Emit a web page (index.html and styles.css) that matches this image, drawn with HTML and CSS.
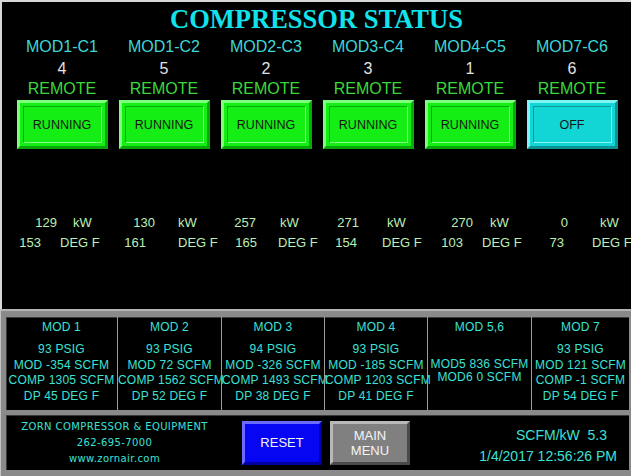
FILE: index.html
```html
<!DOCTYPE html>
<html lang="en">
<head>
    <meta charset="utf-8">
    <title>Compressor Status</title>
    <link rel="stylesheet" href="styles.css">
</head>
<body>
<div class="screen">
    <section class="status">
        <h1 class="title">COMPRESSOR STATUS</h1>
        <div class="units">
            <div class="unit">
                <div class="unit-name">MOD1-C1</div>
                <div class="unit-seq">4</div>
                <div class="unit-mode">REMOTE</div>
                <div class="btn btn-run"><span class="btn-face">RUNNING</span></div>
                <div class="reading kw"><span class="val">129</span><span class="lbl">kW</span></div>
                <div class="reading temp"><span class="val">153</span><span class="lbl">DEG F</span></div>
            </div>
            <div class="unit">
                <div class="unit-name">MOD1-C2</div>
                <div class="unit-seq">5</div>
                <div class="unit-mode">REMOTE</div>
                <div class="btn btn-run"><span class="btn-face">RUNNING</span></div>
                <div class="reading kw"><span class="val">130</span><span class="lbl">kW</span></div>
                <div class="reading temp"><span class="val">161</span><span class="lbl">DEG F</span></div>
            </div>
            <div class="unit">
                <div class="unit-name">MOD2-C3</div>
                <div class="unit-seq">2</div>
                <div class="unit-mode">REMOTE</div>
                <div class="btn btn-run"><span class="btn-face">RUNNING</span></div>
                <div class="reading kw"><span class="val">257</span><span class="lbl">kW</span></div>
                <div class="reading temp"><span class="val">165</span><span class="lbl">DEG F</span></div>
            </div>
            <div class="unit">
                <div class="unit-name">MOD3-C4</div>
                <div class="unit-seq">3</div>
                <div class="unit-mode">REMOTE</div>
                <div class="btn btn-run"><span class="btn-face">RUNNING</span></div>
                <div class="reading kw"><span class="val">271</span><span class="lbl">kW</span></div>
                <div class="reading temp"><span class="val">154</span><span class="lbl">DEG F</span></div>
            </div>
            <div class="unit">
                <div class="unit-name">MOD4-C5</div>
                <div class="unit-seq">1</div>
                <div class="unit-mode">REMOTE</div>
                <div class="btn btn-run"><span class="btn-face">RUNNING</span></div>
                <div class="reading kw"><span class="val">270</span><span class="lbl">kW</span></div>
                <div class="reading temp"><span class="val">103</span><span class="lbl">DEG F</span></div>
            </div>
            <div class="unit">
                <div class="unit-name">MOD7-C6</div>
                <div class="unit-seq">6</div>
                <div class="unit-mode">REMOTE</div>
                <div class="btn btn-off"><span class="btn-face">OFF</span></div>
                <div class="reading kw"><span class="val">0</span><span class="lbl">kW</span></div>
                <div class="reading temp"><span class="val">73</span><span class="lbl">DEG F</span></div>
            </div>
        </div>
    </section>

    <section class="panel">
        <div class="mods">
            <div class="mod">
                <div class="mod-head">MOD 1</div>
                <div class="mod-lines">
                    <div>93 PSIG</div>
                    <div>MOD -354 SCFM</div>
                    <div>COMP 1305 SCFM</div>
                    <div>DP 45 DEG F</div>
                </div>
            </div>
            <div class="mod">
                <div class="mod-head">MOD 2</div>
                <div class="mod-lines">
                    <div>93 PSIG</div>
                    <div>MOD 72 SCFM</div>
                    <div>COMP 1562 SCFM</div>
                    <div>DP 52 DEG F</div>
                </div>
            </div>
            <div class="mod">
                <div class="mod-head">MOD 3</div>
                <div class="mod-lines">
                    <div>94 PSIG</div>
                    <div>MOD -326 SCFM</div>
                    <div>COMP 1493 SCFM</div>
                    <div>DP 38 DEG F</div>
                </div>
            </div>
            <div class="mod">
                <div class="mod-head">MOD 4</div>
                <div class="mod-lines">
                    <div>93 PSIG</div>
                    <div>MOD -185 SCFM</div>
                    <div>COMP 1203 SCFM</div>
                    <div>DP 41 DEG F</div>
                </div>
            </div>
            <div class="mod">
                <div class="mod-head">MOD 5,6</div>
                <div class="mod-lines mod-lines-short">
                    <div>MOD5 836 SCFM</div>
                    <div>MOD6 0 SCFM</div>
                </div>
            </div>
            <div class="mod">
                <div class="mod-head">MOD 7</div>
                <div class="mod-lines">
                    <div>93 PSIG</div>
                    <div>MOD 121 SCFM</div>
                    <div>COMP -1 SCFM</div>
                    <div>DP 54 DEG F</div>
                </div>
            </div>
        </div>

        <div class="footer">
            <div class="company">
                <div>ZORN COMPRESSOR &amp; EQUIPMENT</div>
                <div>262-695-7000</div>
                <div>www.zornair.com</div>
            </div>
            <div class="key key-reset">RESET</div>
            <div class="key key-menu">MAIN<br>MENU</div>
            <div class="summary">
                <div class="ratio">SCFM/kW&nbsp;&nbsp;5.3</div>
                <div class="clock">1/4/2017 12:56:26 PM</div>
            </div>
        </div>
    </section>
</div>
</body>
</html>
```

FILE: styles.css
```css
body {
    margin: 0;
    background: #000;
    font-family: "Liberation Sans", Arial, sans-serif;
}

.screen {
    width: 631px;
    height: 476px;
    overflow: hidden;
    background: #000;
}

/* upper half: one column per compressor */
.status {
    height: 307px;
    border-top: 2px solid #d8d8d8;
    border-left: 2px solid #d8d8d8;
    overflow: hidden;
}

.title {
    margin: 2px 0 0;
    font-family: "Liberation Serif", "Times New Roman", serif;
    font-size: 26.5px;
    font-weight: bold;
    line-height: 30px;
    text-align: center;
    color: #12e2ea;
}

.units {
    display: grid;
    grid-template-columns: repeat(6, 102px);
    padding: 1px 0 0 9px;
}

.unit {
    display: flex;
    flex-direction: column;
    align-items: center;
    font-size: 16px;
}

.unit-name {
    line-height: 23px;
    color: #3fd6d6;
}

.unit-seq {
    line-height: 21px;
    color: #e2e2e2;
}

.unit-mode {
    line-height: 19px;
    color: #3bd83b;
}

/* bevelled HMI buttons */
.btn {
    box-sizing: border-box;
    width: 91px;
    height: 49px;
    margin-top: 2px;
    padding: 3px;
    border: 3px solid;
}

.btn-face {
    box-sizing: border-box;
    display: flex;
    align-items: center;
    justify-content: center;
    height: 100%;
    border: 1px solid;
    font-size: 12.5px;
    color: #161616;
}

.btn-run {
    background: #14ee14;
    border-color: #7dff7d #08a808 #08a808 #7dff7d;
}

.btn-run .btn-face {
    border-color: #0aa80a #86ff86 #86ff86 #0aa80a;
}

.btn-off {
    background: #12d6d6;
    border-color: #7ff4f4 #0a9494 #0a9494 #7ff4f4;
}

.btn-off .btn-face {
    border-color: #0a9494 #88f6f6 #88f6f6 #0a9494;
}

/* kW / temperature fields, placed like the panel's numeric displays */
.reading {
    align-self: stretch;
    display: flex;
    font-size: 13px;
    line-height: 20px;
    white-space: nowrap;
    color: #bdeeb5;
}

.reading .val {
    flex: none;
    width: var(--r);
    text-align: right;
}

.reading .lbl {
    flex: none;
    margin-left: calc(var(--u) - var(--r));
}

.reading.kw {
    margin-top: 64px;
}

.unit:nth-child(1) .kw { --r: 46px; --u: 62px; }
.unit:nth-child(1) .temp { --r: 30px; --u: 49px; }
.unit:nth-child(2) .kw { --r: 42px; --u: 65px; }
.unit:nth-child(2) .temp { --r: 33px; --u: 65px; }
.unit:nth-child(3) .kw { --r: 41px; --u: 65px; }
.unit:nth-child(3) .temp { --r: 42px; --u: 63px; }
.unit:nth-child(4) .kw { --r: 42px; --u: 70px; }
.unit:nth-child(4) .temp { --r: 40px; --u: 65px; }
.unit:nth-child(5) .kw { --r: 54px; --u: 71px; }
.unit:nth-child(5) .temp { --r: 44px; --u: 63px; }
.unit:nth-child(6) .kw { --r: 47px; --u: 79px; }
.unit:nth-child(6) .temp { --r: 43px; --u: 71px; }

/* lower half: grey frame with the module table and footer */
.panel {
    box-sizing: border-box;
    height: 169px;
    padding: 6px 2px 8px 5px;
    background: #8a8a8a;
    border-top: 2px solid #b4b4b4;
    border-left: 1px solid #c4c4c4;
}

.mods {
    display: grid;
    grid-template-columns: 111px 104px 103px 103px 104px 1fr;
    height: 93px;
    background: #000;
    box-shadow: inset 1px 1px 0 #3a3a3a;
    font-size: 12px;
    letter-spacing: 0.2px;
    color: #3ce0d6;
    text-align: center;
    white-space: nowrap;
}

.mod + .mod {
    border-left: 1px solid #9c9c9c;
}

.mod-head {
    padding-top: 3px;
    line-height: 15px;
}

.mod-lines {
    margin-top: 7px;
    line-height: 15.5px;
}

.mod-lines-short {
    margin-top: 23px;
    line-height: 13px;
}

.footer {
    display: flex;
    align-items: center;
    height: 55px;
    margin-top: 5px;
    background: #000;
    box-shadow: inset 1px 1px 0 #3a3a3a;
}

.company {
    width: 217px;
    font-family: "DejaVu Sans", sans-serif;
    font-size: 10px;
    letter-spacing: 0.4px;
    line-height: 16px;
    text-align: center;
    color: #3ce0d6;
}

.key {
    box-sizing: border-box;
    display: flex;
    align-items: center;
    justify-content: center;
    width: 80px;
    height: 44px;
    border: 3px solid;
    font-size: 13px;
    line-height: 15px;
    text-align: center;
    color: #f4f4f4;
}

.key-reset {
    margin-left: 19px;
    background: #0606f2;
    border-color: #6a6aff #0000a0 #0000a0 #6a6aff;
}

.key-menu {
    margin-left: 8px;
    background: #808080;
    border-color: #b8b8b8 #4a4a4a #4a4a4a #b8b8b8;
}

.summary {
    flex: 1;
    padding-right: 12px;
    font-size: 14px;
    text-align: right;
    color: #3ce0d6;
}

.ratio {
    padding-right: 10px;
    line-height: 26px;
}

.clock {
    line-height: 16px;
}
```
